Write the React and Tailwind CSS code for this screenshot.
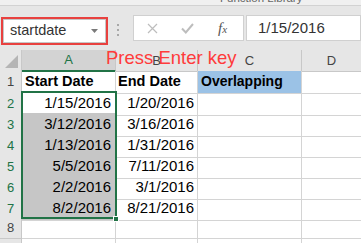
const rows = [
  ["1/15/2016", "1/20/2016"],
  ["3/12/2016", "3/16/2016"],
  ["1/13/2016", "1/31/2016"],
  ["5/5/2016", "7/11/2016"],
  ["2/2/2016", "3/1/2016"],
  ["8/2/2016", "8/21/2016"],
];

const cols = "grid grid-cols-[22px_94px_82px_104px_1fr] h-[21px]";
const cell = "border-r border-b border-[#d4d4d4]";

function FormulaBar() {
  return (
    <div className="flex items-start h-[44px] bg-[#e6e6e6]">
      {/* name box, outlined in red */}
      <div className="ml-[1px] mt-[11px] w-[107px] h-[28px] border-2 border-[#e8413f]">
        <div className="h-full bg-white border border-[#c6c6c6] flex items-center pl-[6px] pr-[7px]">
          <span className="flex-1 text-[14.5px] text-[#333]">startdate</span>
          <svg width="7" height="4" viewBox="0 0 7 4">
            <path d="M0 0h7L3.5 4z" fill="#7a7a7a" />
          </svg>
        </div>
      </div>
      <div className="ml-[9px] mt-[18px] flex flex-col gap-[3px]">
        <div className="w-[2px] h-[2px] bg-[#a8a8a8]" />
        <div className="w-[2px] h-[2px] bg-[#a8a8a8]" />
        <div className="w-[2px] h-[2px] bg-[#a8a8a8]" />
      </div>
      <div className="ml-[14px] mt-[9px] w-[111px] h-[26px] bg-white border border-[#d0d0d0] flex items-center">
        <svg className="ml-[13px]" width="11" height="11" viewBox="0 0 11 11">
          <path d="M1 1l9 9M10 1l-9 9" stroke="#bdbdbd" strokeWidth="1.2" />
        </svg>
        <svg className="ml-[23px]" width="13" height="11" viewBox="0 0 13 11">
          <path d="M1 5.5l3.8 4L12 1" stroke="#bdbdbd" strokeWidth="2" fill="none" />
        </svg>
        <span
          className="ml-[24px] italic text-[15px] text-[#555] leading-none"
          style={{ fontFamily: '"Liberation Serif", serif' }}
        >
          f<span className="text-[11px]">x</span>
        </span>
      </div>
      <div className="ml-[2px] mt-[9px] flex-1 h-[26px] bg-white border border-[#d0d0d0] flex items-center pl-[11px]">
        <span className="text-[15px] text-[#333]">1/15/2016</span>
      </div>
    </div>
  );
}

export default function App() {
  return (
    <div
      className="relative w-[361px] h-[243px] overflow-hidden bg-white"
      style={{ fontFamily: '"Liberation Sans", Arial, sans-serif' }}
    >
      <div className="h-[6px] overflow-hidden bg-[#f0f0f0] border-b border-[#d2d2d2] pl-[220px]">
        <div className="-mt-[10px] text-[11.5px] text-[#666] whitespace-nowrap">Function Library</div>
      </div>
      <FormulaBar />

      {/* column headers */}
      <div className={cols + " bg-[#e6e6e6] text-[13px] text-[#444]"}>
        <div className="border-r border-b border-[#c8c8c8] flex items-end justify-end pr-[3px] pb-[3px]">
          <svg width="13" height="13" viewBox="0 0 13 13">
            <path d="M13 0v13H0z" fill="#b5b5b5" />
          </svg>
        </div>
        <div className="bg-[#d3d3d3] border-r border-[#c8c8c8] border-b-2 border-b-[#217346] flex items-center justify-center text-[#217346]">
          A
        </div>
        <div className="border-r border-b border-[#c8c8c8] flex items-center justify-center">B</div>
        <div className="border-r border-b border-[#c8c8c8] flex items-center justify-center">C</div>
        <div className="border-b border-[#c8c8c8] flex items-center justify-center">D</div>
      </div>

      <div className="relative text-[15px] text-black">
        <div className={cols}>
          <div className="bg-[#e6e6e6] border-r border-b border-[#c8c8c8] flex items-center justify-center text-[13px] text-[#444]">
            1
          </div>
          <div className={cell + " flex items-center pl-[3px] font-bold text-[14.5px]"}>Start Date</div>
          <div className={cell + " flex items-center pl-[2px] font-bold text-[14.5px]"}>End Date</div>
          <div className={cell + " bg-[#9bc2e6] flex items-center pl-[3px] font-bold text-[14px]"}>Overlapping</div>
          <div className="border-b border-[#d4d4d4]" />
        </div>
        {rows.map(([a, b], i) => (
          <div key={i} className={cols}>
            <div className="bg-[#e6e6e6] border-r border-b border-[#c8c8c8] flex items-center justify-center text-[13px] text-[#217346]">
              {i + 2}
            </div>
            <div
              className={
                cell +
                " flex items-center justify-end pr-[4px] " +
                (i === 0 ? "bg-white" : "bg-[#c6c6c6]")
              }
            >
              {a}
            </div>
            <div className={cell + " flex items-center justify-end pr-[3px]"}>{b}</div>
            <div className={cell} />
            <div className="border-b border-[#d4d4d4]" />
          </div>
        ))}
        <div className={cols}>
          <div className="bg-[#e6e6e6] border-r border-b border-[#c8c8c8] flex items-center justify-center text-[13px] text-[#444]">
            8
          </div>
          <div className={cell} />
          <div className={cell} />
          <div className={cell} />
          <div className="border-b border-[#d4d4d4]" />
        </div>
        {/* top of row 9, cut by the window */}
        <div className={cols}>
          <div className="bg-[#e6e6e6] border-r border-[#c8c8c8]" />
          <div className="border-r border-[#d4d4d4]" />
          <div className="border-r border-[#d4d4d4]" />
          <div className="border-r border-[#d4d4d4]" />
          <div />
        </div>

        {/* selection outline A2:A7 */}
        <div className="absolute left-[21px] top-[20px] w-[96px] h-[128px] border-2 border-[#217346] pointer-events-none" />
        <div className="absolute left-[113px] top-[145px] w-[6px] h-[6px] bg-[#217346] border border-white" />
      </div>

      <div className="absolute left-[106px] top-[44px] text-[18.5px] text-[#ff3b3b] whitespace-nowrap">
        Press Enter key
      </div>
    </div>
  );
}
